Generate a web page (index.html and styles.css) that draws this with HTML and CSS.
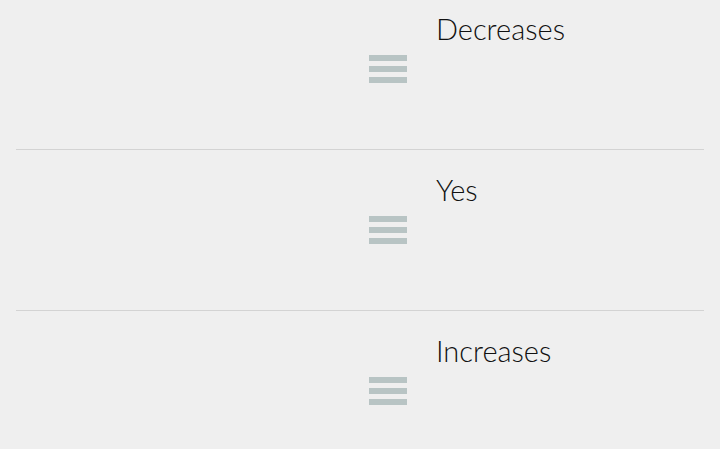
FILE: index.html
```html
<!DOCTYPE html>
<html lang="en">
<head>
  <meta charset="UTF-8">
  <title>Sortable answers</title>
  <link rel="stylesheet" href="styles.css">
</head>
<body>

  <ul class="sort-list">
    <li class="sort-item">
      <span class="handle"><i></i><i></i><i></i></span>
      <span class="label">Decreases</span>
    </li>
    <li class="sort-item">
      <span class="handle"><i></i><i></i><i></i></span>
      <span class="label">Yes</span>
    </li>
    <li class="sort-item">
      <span class="handle"><i></i><i></i><i></i></span>
      <span class="label">Increases</span>
    </li>
  </ul>

</body>
</html>
```

FILE: styles.css
```css
body { margin: 0; background: #efefef; font-family: "Lato", "Open Sans", sans-serif; color: #111; overflow: hidden; }
.sort-list { list-style: none; margin: -11px 16px 0; padding: 0; }
.sort-item { display: flex; height: 160px; border-bottom: 1px solid #d3d3d3; padding-left: 353px; }
.handle { display: flex; flex-direction: column; gap: 5px; width: 38px; align-self: center; }
.handle i { display: block; height: 6px; background: #b8c4c4; }
.label { margin-left: 29px; padding-top: 22px; font-size: 29px; font-weight: 300; line-height: 36px; }
```
